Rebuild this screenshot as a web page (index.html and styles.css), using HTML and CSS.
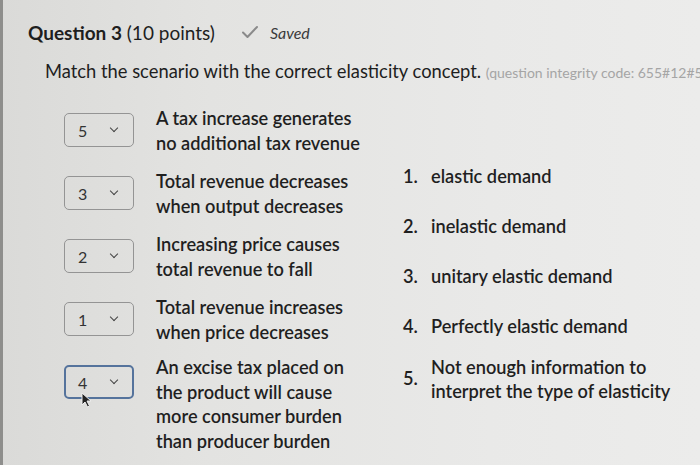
FILE: index.html
```html
<!DOCTYPE html>
<html lang="en">
<head>
    <meta charset="UTF-8">
    <title>Question 3</title>
    <link rel="stylesheet" href="styles.css">
</head>
<body>
    <div class="page">
        <div class="question-header">
            <h2 class="question-title"><strong>Question 3</strong> (10 points)</h2>
            <svg class="saved-check" width="18" height="14" viewBox="0 0 18 14">
                <path d="M2 7.5 L6.5 12 L16 2" fill="none" stroke="#8a8a8a" stroke-width="2" stroke-linecap="round" stroke-linejoin="round"/>
            </svg>
            <span class="saved">Saved</span>
        </div>

        <p class="prompt">
            Match the scenario with the correct elasticity concept.
            <span class="integrity">(question integrity code: 655#12#5</span>
        </p>

        <div class="match">
            <div class="scenarios">
                <div class="scenario">
                    <div class="answer-select"><span>5</span><span class="chev"></span></div>
                    <div class="scenario-text">A tax increase generates<br>no additional tax revenue</div>
                </div>
                <div class="scenario">
                    <div class="answer-select"><span>3</span><span class="chev"></span></div>
                    <div class="scenario-text">Total revenue decreases<br>when output decreases</div>
                </div>
                <div class="scenario">
                    <div class="answer-select"><span>2</span><span class="chev"></span></div>
                    <div class="scenario-text">Increasing price causes<br>total revenue to fall</div>
                </div>
                <div class="scenario">
                    <div class="answer-select"><span>1</span><span class="chev"></span></div>
                    <div class="scenario-text">Total revenue increases<br>when price decreases</div>
                </div>
                <div class="scenario last">
                    <div class="answer-select focused">
                        <span>4</span><span class="chev"></span>
                        <svg class="cursor" width="12" height="16" viewBox="0 0 12 16">
                            <path d="M1 1 L1 13 L4 10 L6.5 15 L8.5 14 L6 9 L10 9 Z" fill="#222" stroke="#eee" stroke-width="1"/>
                        </svg>
                    </div>
                    <div class="scenario-text">An excise tax placed on<br>the product will cause<br>more consumer burden<br>than producer burden</div>
                </div>
            </div>

            <ol class="concepts">
                <li><span class="num">1.</span><span>elastic demand</span></li>
                <li><span class="num">2.</span><span>inelastic demand</span></li>
                <li><span class="num">3.</span><span>unitary elastic demand</span></li>
                <li><span class="num">4.</span><span>Perfectly elastic demand</span></li>
                <li class="two-line"><span class="num">5.</span><span>Not enough information to<br>interpret the type of elasticity</span></li>
            </ol>
        </div>
    </div>
</body>
</html>
```

FILE: styles.css
```css
* {
    box-sizing: border-box;
    margin: 0;
    padding: 0;
}

html, body {
    height: 100%;
}

body {
    font-family: Lato, "Open Sans", sans-serif;
    color: #222;
    background: linear-gradient(90deg, #dadad8 0%, #e3e3e1 30%, #e9e9e8 70%, #ececeb 100%);
    border-left: 3px solid #8e8e8c;
    overflow: hidden;
}

.page {
    padding: 19px 0 0 25px;
}

.question-header {
    display: flex;
    align-items: center;
    height: 26px;
}

.question-title {
    font-size: 19px;
    font-weight: normal;
    color: #1e1e1e;
}

.question-title strong {
    font-weight: bold;
}

.saved-check {
    margin-left: 26px;
}

.saved {
    margin-left: 11px;
    font-size: 16px;
    font-style: italic;
    color: #3a3a3a;
}

.prompt {
    margin: 15px 0 0 17px;
    font-size: 18.35px;
    white-space: nowrap;
    color: #1e1e1e;
}

.integrity {
    font-size: 14px;
    color: #a5a5a5;
}

.match {
    display: flex;
    margin-top: 24px;
}

.scenarios {
    display: flex;
    flex-direction: column;
    gap: 14px;
    margin-left: 36px;
    width: 339px;
}

.scenario {
    display: flex;
    align-items: flex-start;
    gap: 22px;
}

.scenario.last {
    margin-top: -3px;
}

.answer-select {
    position: relative;
    display: flex;
    align-items: center;
    justify-content: space-between;
    width: 70px;
    height: 34px;
    margin-top: 7px;
    padding: 0 16px 0 13px;
    border: 1px solid #949494;
    border-radius: 5px;
    font-size: 16px;
    color: #333;
}

.answer-select.focused {
    border: 2px solid #55739c;
    margin-top: 10px;
    padding: 0 15px 0 12px;
}

.chev {
    width: 6px;
    height: 6px;
    border-right: 1.7px solid #444;
    border-bottom: 1.7px solid #444;
    transform: translateY(-2px) rotate(45deg);
}

.cursor {
    position: absolute;
    left: 15px;
    top: 25px;
}

.scenario-text {
    font-size: 18.2px;
    font-weight: 600;
    line-height: 24.5px;
    color: #1f1f1f;
}

.concepts {
    list-style: none;
    display: flex;
    flex-direction: column;
    gap: 26px;
    margin-top: 58px;
    font-size: 18.2px;
    font-weight: 600;
    line-height: 24px;
    color: #1f1f1f;
}

.concepts li {
    display: flex;
    align-items: center;
}

.concepts .num {
    width: 28px;
}

.concepts .two-line {
    margin-top: -9px;
}

.concepts .two-line .num {
    padding-bottom: 2px;
}
```
